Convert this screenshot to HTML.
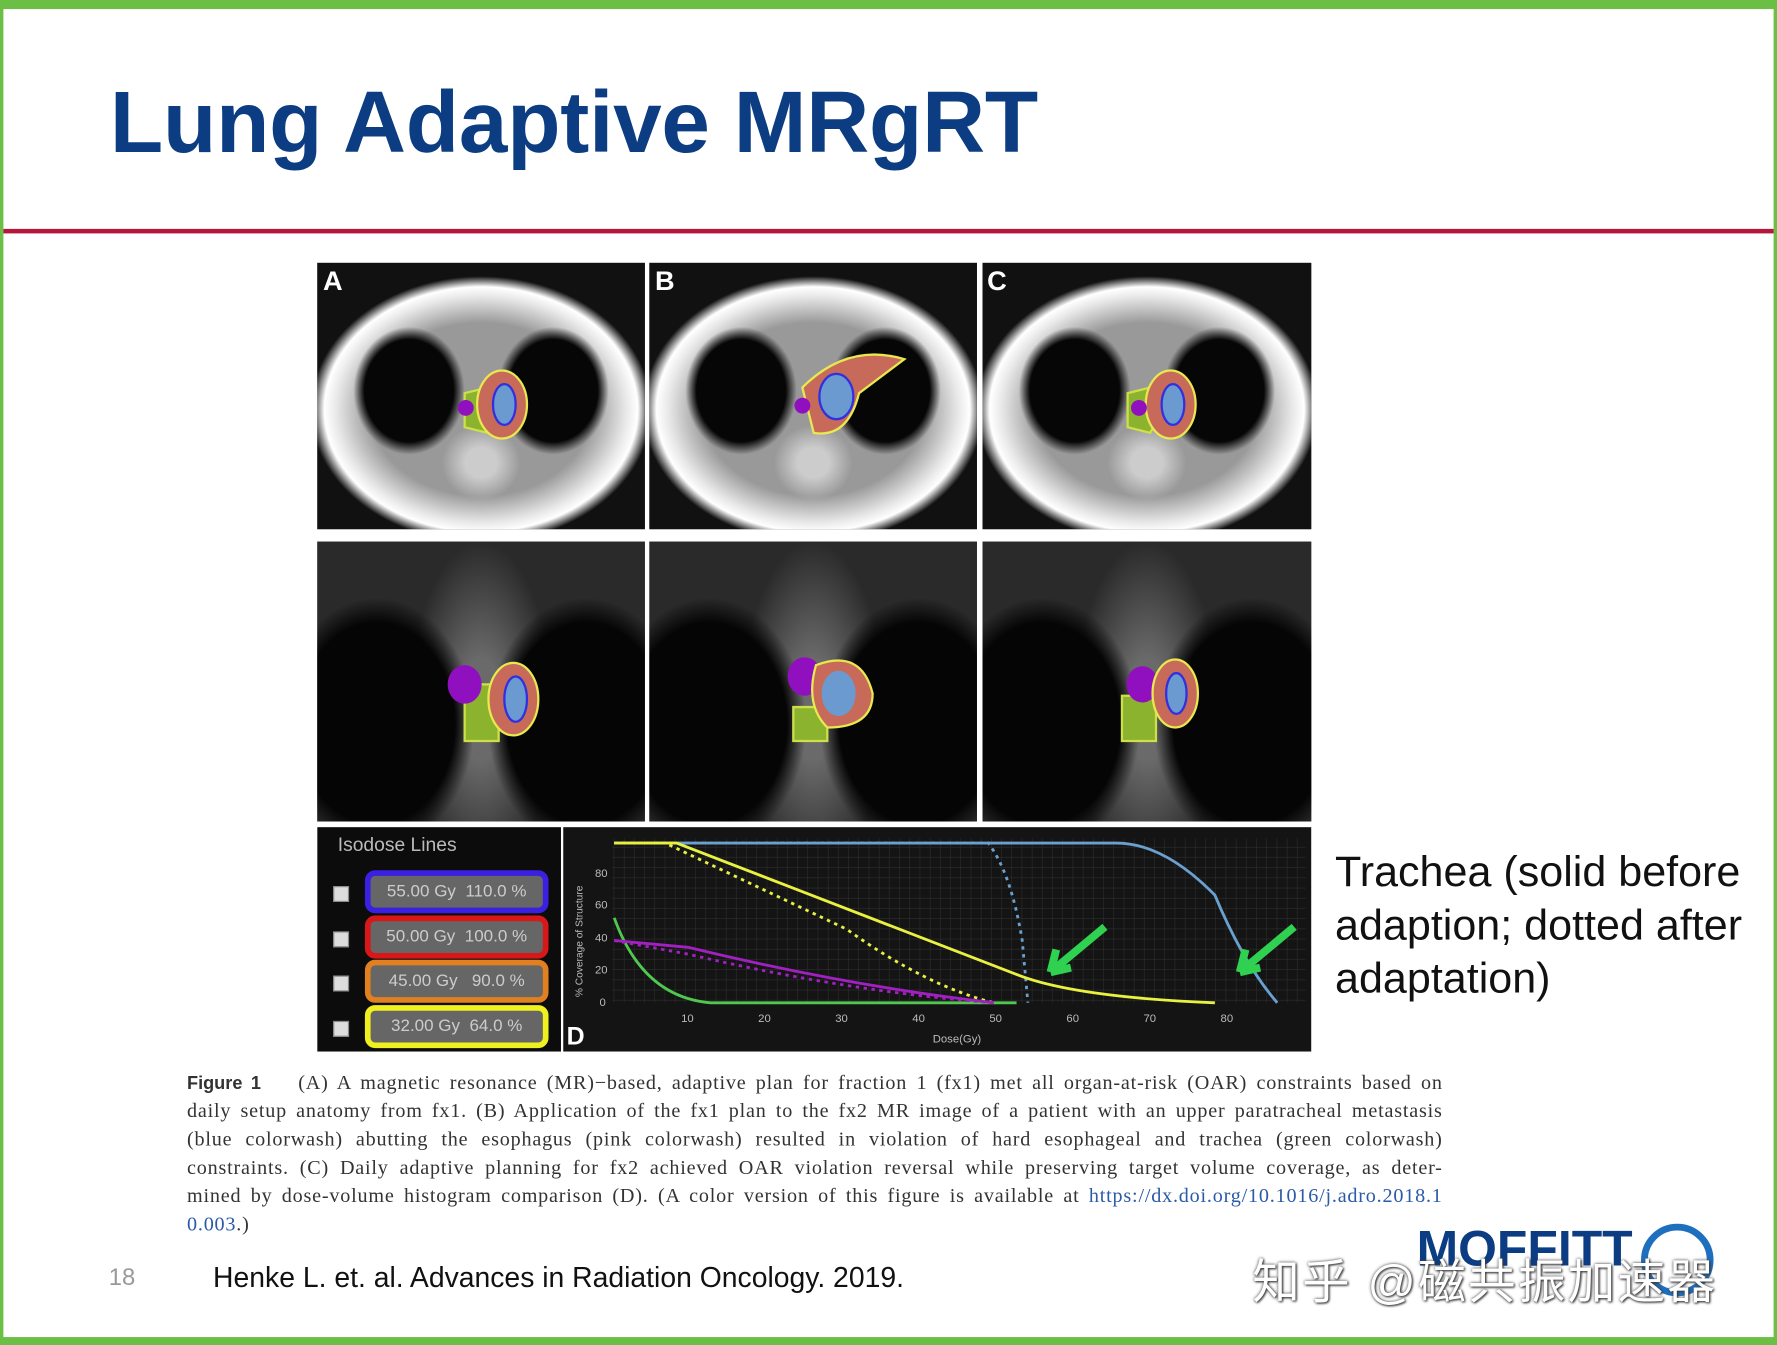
<!DOCTYPE html>
<html><head><meta charset="utf-8"><style>
body{margin:0;background:#fff;overflow:hidden}
#w{position:absolute;left:0;top:0;width:1568px;height:1187px;transform:scale(1.13329,1.13311);transform-origin:0 0;background:#fff;font-family:"Liberation Sans",sans-serif}
.abs{position:absolute}
.ax{position:absolute;background:
radial-gradient(ellipse 17% 24% at 28% 48%,#060606 80%,transparent 100%),
radial-gradient(ellipse 17% 24% at 72% 48%,#060606 80%,transparent 100%),
radial-gradient(ellipse 12% 14% at 50% 75%,#ccc 40%,transparent 100%),
radial-gradient(ellipse 52% 50% at 50% 55%,#999 65%,#e8e8e8 85%,#fff 92%,#111 100%);background-color:#000}
.co{position:absolute;background:
radial-gradient(ellipse 30% 45% at 18% 65%,#050505 80%,transparent 100%),
radial-gradient(ellipse 30% 45% at 82% 65%,#050505 80%,transparent 100%),
radial-gradient(ellipse 22% 60% at 50% 60%,#6a6a6a 30%,#2a2a2a 100%);background-color:#111}
.lab{position:absolute;color:#fff;font-weight:bold;font-size:24px;left:5px;top:3px}
.iso{position:absolute;left:42px;width:152px;height:28px;border-radius:9px;border:5px solid;background:#666;color:#ccc;font-size:15px;line-height:28px;text-align:center;box-sizing:content-box}
.cb{position:absolute;left:14px;width:12px;height:12px;background:#ddd;border:1px solid #888}
.cap{font-family:"Liberation Serif",serif;font-size:17.8px;letter-spacing:0.7px;line-height:25px;color:#333}
.cap div{white-space:nowrap;text-align:justify;text-align-last:justify;height:25px}
</style></head><body><div id="w">
<div class="abs" style="left:0;top:0;width:1568px;height:8px;background:#6cbf45"></div>
<div class="abs" style="left:0;top:0;width:3px;height:1187px;background:#6cbf45"></div>
<div class="abs" style="right:0;top:0;width:3px;height:1187px;background:#6cbf45"></div>
<div class="abs" style="left:0;top:1180px;width:1568px;height:7px;background:#6cbf45"></div>
<div class="abs" style="left:97px;top:64px;font-size:77px;font-weight:bold;color:#0c3d82;letter-spacing:-0.2px">Lung Adaptive MRgRT</div>
<div class="abs" style="left:3px;top:202px;width:1562px;height:4px;background:#b5173a"></div>

<div class="abs" style="left:280px;top:232px;width:877px;height:696px;background:#fff">
 <div class="ax" style="left:0;top:0;width:289px;height:235px"></div>
 <div class="ax" style="left:293px;top:0;width:289px;height:235px"></div>
 <div class="ax" style="left:587px;top:0;width:290px;height:235px"></div>
 <div class="co" style="left:0;top:246px;width:289px;height:247px"></div>
 <div class="co" style="left:293px;top:246px;width:289px;height:247px"></div>
 <div class="co" style="left:587px;top:246px;width:290px;height:247px"></div>
 <div class="lab">A</div><div class="lab" style="left:298px">B</div><div class="lab" style="left:591px">C</div>
 <svg class="abs" style="left:0;top:0" width="877" height="493">
  <g fill="none" stroke-width="2">
   <path d="M130 115 l20 -5 10 20 -10 20 -20 -5z" fill="#8bb32e" stroke="#cde04a"/>
   <ellipse cx="163" cy="125" rx="22" ry="30" stroke="#e8e850" fill="#c86a5a"/><ellipse cx="165" cy="125" rx="10" ry="18" fill="#6a9ad0" stroke="#3030e0"/>
   <circle cx="131" cy="128" r="7" fill="#9010c0"/>
   <path d="M428 110 q40 -40 90 -25 l-40 30 q-10 40 -40 35z" stroke="#e8e850" fill="#c86a5a"/><ellipse cx="458" cy="118" rx="15" ry="20" fill="#6a9ad0" stroke="#3030e0"/>
   <circle cx="428" cy="126" r="7" fill="#9010c0"/>
   <path d="M715 115 l20 -5 10 20 -10 20 -20 -5z" fill="#8bb32e" stroke="#cde04a"/>
   <ellipse cx="753" cy="125" rx="22" ry="30" stroke="#e8e850" fill="#c86a5a"/><ellipse cx="755" cy="125" rx="10" ry="18" fill="#6a9ad0" stroke="#3030e0"/>
   <circle cx="725" cy="128" r="7" fill="#9010c0"/>
   <path d="M130 372 h30 v50 h-30z" fill="#8bb32e" stroke="#cde04a"/><ellipse cx="130" cy="372" rx="15" ry="17" fill="#9010c0"/>
   <ellipse cx="173" cy="385" rx="22" ry="32" stroke="#e8e850" fill="#c86a5a"/><ellipse cx="175" cy="385" rx="10" ry="20" fill="#6a9ad0" stroke="#3030e0"/>
   <path d="M420 392 h30 v30 h-30z" fill="#8bb32e" stroke="#cde04a"/><ellipse cx="430" cy="365" rx="15" ry="17" fill="#9010c0"/>
   <path d="M440 355 q40 -15 50 25 q0 30 -40 30 q-20 -20 -10 -55z" stroke="#e8e850" fill="#c86a5a"/><ellipse cx="460" cy="380" rx="15" ry="20" fill="#6a9ad0"/>
   <path d="M710 382 h30 v40 h-30z" fill="#8bb32e" stroke="#cde04a"/><ellipse cx="728" cy="372" rx="14" ry="16" fill="#9010c0"/>
   <ellipse cx="757" cy="380" rx="20" ry="30" stroke="#e8e850" fill="#c86a5a"/><ellipse cx="758" cy="380" rx="9" ry="18" fill="#6a9ad0" stroke="#3030e0"/>
  </g>
 </svg>
 <div class="abs" style="left:0;top:498px;width:215px;height:198px;background:#0c0c0c">
  <div class="abs" style="left:18px;top:6px;color:#bbb;font-size:17px">Isodose Lines</div>
  <div class="cb" style="top:52px"></div><div class="iso" style="top:38px;border-color:#3a20e0">55.00 Gy &nbsp;110.0 %</div>
  <div class="cb" style="top:92px"></div><div class="iso" style="top:78px;border-color:#d81818">50.00 Gy &nbsp;100.0 %</div>
  <div class="cb" style="top:131px"></div><div class="iso" style="top:117px;border-color:#e08020">45.00 Gy &nbsp; 90.0 %</div>
  <div class="cb" style="top:171px"></div><div class="iso" style="top:157px;border-color:#f0f020">32.00 Gy &nbsp;64.0 %</div>
 </div>
 <div class="abs" style="left:217px;top:498px;width:660px;height:198px;background:#141414">
  <svg width="660" height="198" style="position:absolute;left:0;top:0">
   <defs><pattern id="g" width="9" height="9" patternUnits="userSpaceOnUse"><path d="M9 0V9H0" fill="none" stroke="#2e2e2e" stroke-width="1"/></pattern></defs>
   <rect x="43" y="10" width="612" height="145" fill="url(#g)"/>
   <g fill="#bbb" font-size="10" font-family="Liberation Sans"><text x="28" y="44">80</text><text x="28" y="72">60</text><text x="28" y="101">40</text><text x="28" y="129">20</text><text x="32" y="158">0</text>
   <text x="104" y="172">10</text><text x="172" y="172">20</text><text x="240" y="172">30</text><text x="308" y="172">40</text><text x="376" y="172">50</text><text x="444" y="172">60</text><text x="512" y="172">70</text><text x="580" y="172">80</text><text x="326" y="190">Dose(Gy)</text>
   <text transform="translate(17,150) rotate(-90)" font-size="9">% Coverage of Structure</text></g>
   <g fill="none" stroke-width="2.5">
    <path d="M45 14 H488 Q530 14 575 60 Q600 120 630 155" stroke="#6aa0d0"/>
    <path d="M45 14 H375 Q395 40 405 100 L410 155" stroke="#6aa0d0" stroke-dasharray="3 4"/>
    <path d="M45 14 H100 L400 130 Q450 150 575 155" stroke="#e8f040"/>
    <path d="M45 14 H90 L250 90 Q320 140 380 155" stroke="#e8f040" stroke-dasharray="3 4"/>
    <path d="M45 80 Q70 150 130 155 H400" stroke="#50c850"/>
    <path d="M45 100 L110 106 Q250 140 380 155" stroke="#a020c0"/>
    <path d="M45 100 L110 112 Q250 145 380 155" stroke="#a020c0" stroke-dasharray="3 4"/>
   </g>
   <path d="M478 88 L430 128 M430 128 l5 -20 M430 128 l18 -4" stroke="#30d050" stroke-width="7" fill="none"/>
   <path d="M645 88 L597 128 M597 128 l5 -20 M597 128 l18 -4" stroke="#30d050" stroke-width="7" fill="none"/>
   <text x="3" y="192" fill="#fff" font-size="22" font-weight="bold" font-family="Liberation Sans">D</text>
  </svg>
 </div>
</div>

<div class="abs" style="left:1178px;top:747px;font-size:38px;line-height:47px;color:#111">Trachea (solid before<br>adaption; dotted after<br>adaptation)</div>

<div class="abs cap" style="left:165px;top:943px;width:1108px">
<div><b style="font-family:'Liberation Sans',sans-serif;font-size:16px;letter-spacing:0">Figure 1</b>&nbsp;&nbsp;&nbsp; (A) A magnetic resonance (MR)−based, adaptive plan for fraction 1 (fx1) met all organ-at-risk (OAR) constraints based on</div>
<div>daily setup anatomy from fx1. (B) Application of the fx1 plan to the fx2 MR image of a patient with an upper paratracheal metastasis</div>
<div>(blue colorwash) abutting the esophagus (pink colorwash) resulted in violation of hard esophageal and trachea (green colorwash)</div>
<div>constraints. (C) Daily adaptive planning for fx2 achieved OAR violation reversal while preserving target volume coverage, as deter-</div>
<div>mined by dose-volume histogram comparison (D). (A color version of this figure is available at <span style="color:#2a5aa8">https://dx.doi.org/10.1016/j.adro.2018.1</span></div>
<div style="text-align-last:left"><span style="color:#2a5aa8">0.003</span>.)</div>
</div>

<div class="abs" style="left:96px;top:1116px;font-size:21px;color:#999">18</div>
<div class="abs" style="left:188px;top:1114px;font-size:25px;color:#111">Henke L. et. al. Advances in Radiation Oncology. 2019.</div>
<div class="abs" style="left:1250px;top:1078px;font-size:44px;font-weight:bold;color:#0c3d82">MOFFITT</div>
<div class="abs" style="left:1448px;top:1080px;width:52px;height:52px;border:6px solid #1f6fbf;border-radius:50%"></div>
<div class="abs" style="left:1105px;top:1098px;font-size:42px;letter-spacing:2px;color:#fff;font-family:'Liberation Sans','Noto Sans CJK SC',sans-serif;text-shadow:0 0 3px #444,1px 1px 2px #333">知乎 @磁共振加速器</div>
</div></body></html>
